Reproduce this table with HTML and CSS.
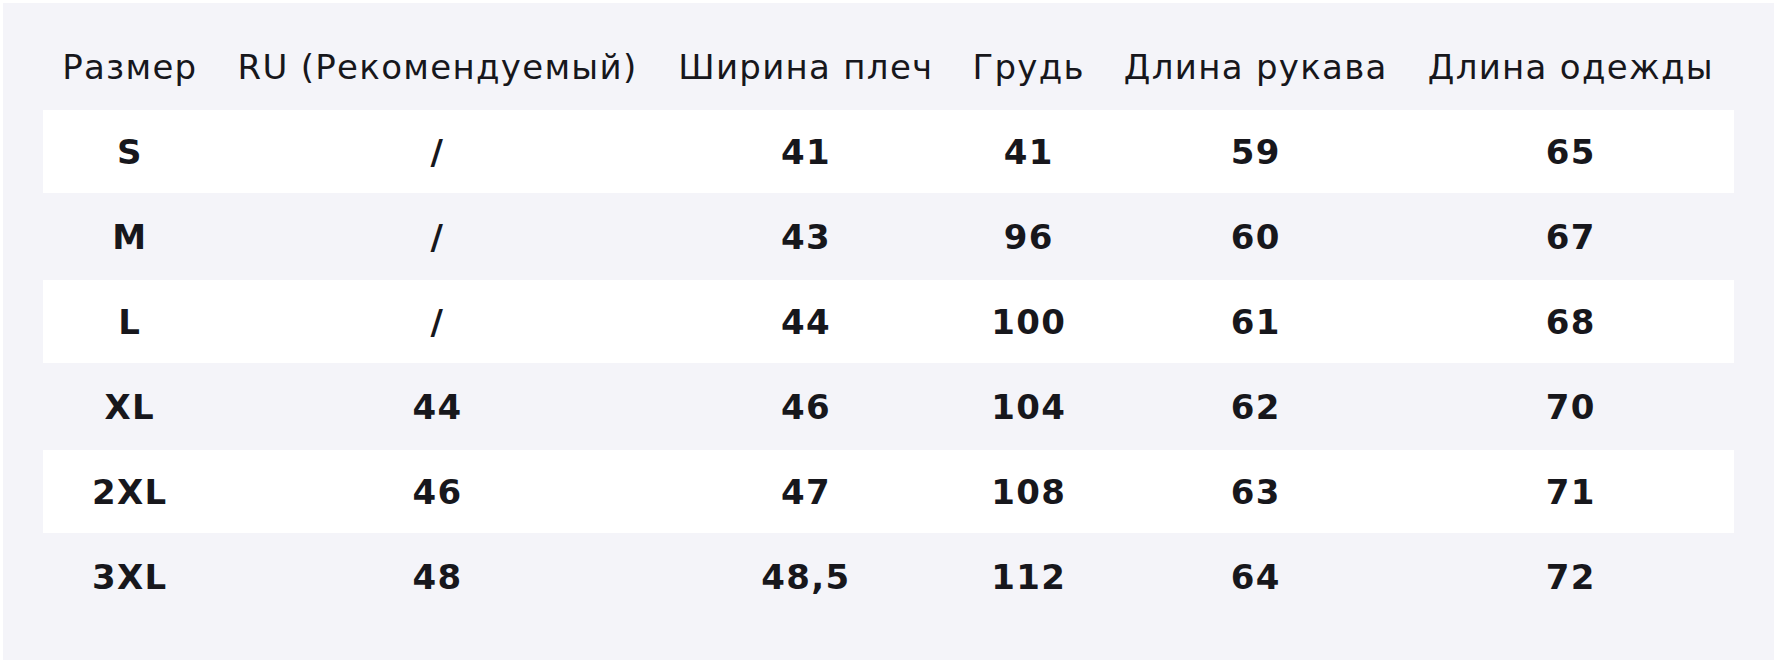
FILE: index.html
```html
<!DOCTYPE html>
<html lang="ru">
<head>
<meta charset="utf-8">
<title>Размеры</title>
<link rel="stylesheet" href="styles.css">
</head>
<body>
<div class="chart">
  <table class="size-table">
    <thead>
      <tr>
        <th>Размер</th>
        <th>RU (Рекомендуемый)</th>
        <th>Ширина плеч</th>
        <th>Грудь</th>
        <th>Длина рукава</th>
        <th>Длина одежды</th>
      </tr>
    </thead>
    <tbody>
      <tr class="odd"><td>S</td><td>/</td><td>41</td><td>41</td><td>59</td><td>65</td></tr>
      <tr><td>M</td><td>/</td><td>43</td><td>96</td><td>60</td><td>67</td></tr>
      <tr class="odd"><td>L</td><td>/</td><td>44</td><td>100</td><td>61</td><td>68</td></tr>
      <tr><td>XL</td><td>44</td><td>46</td><td>104</td><td>62</td><td>70</td></tr>
      <tr class="odd"><td>2XL</td><td>46</td><td>47</td><td>108</td><td>63</td><td>71</td></tr>
      <tr><td>3XL</td><td>48</td><td>48,5</td><td>112</td><td>64</td><td>72</td></tr>
    </tbody>
  </table>
</div>
</body>
</html>
```

FILE: styles.css
```css
html, body {
  margin: 0;
  padding: 0;
  background: #ffffff;
}
body {
  padding: 3px;
}
.chart {
  background: #f4f4f9;
  height: 657px;
  box-sizing: border-box;
  padding: 20px 40px 40px 40px;
}
.size-table {
  width: 100%;
  table-layout: auto;
  border-collapse: separate;
  border-spacing: 0 2px;
  font-family: "DejaVu Sans", sans-serif;
  color: #17171c;
}
.size-table th,
.size-table td {
  height: 83px;
  padding: 0 18px;
  text-align: center;
  white-space: nowrap;
  letter-spacing: 1.3px;
}
.size-table th {
  font-size: 34px;
  font-weight: normal;
}
.size-table td {
  font-size: 34px;
  font-weight: bold;
}
.size-table tr.odd td {
  background: #ffffff;
}
```
